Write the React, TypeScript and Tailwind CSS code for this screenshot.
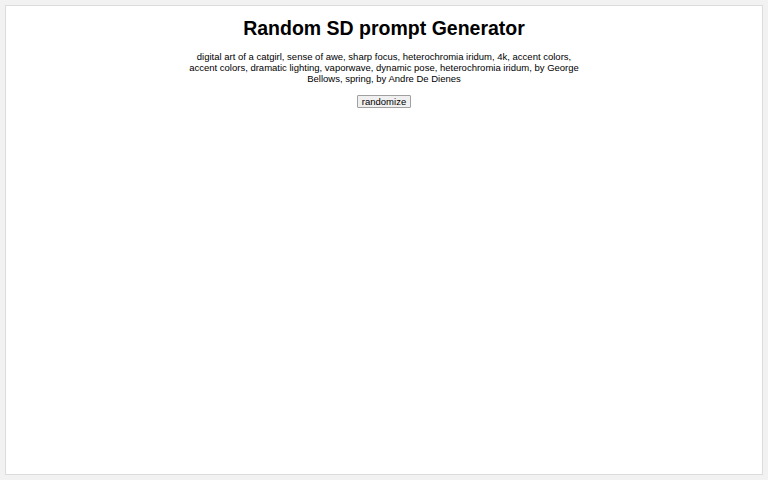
import React, { useState } from 'react';

const PROMPT =
  'digital art of a catgirl, sense of awe, sharp focus, heterochromia iridum, 4k, accent colors, accent colors, dramatic lighting, vaporwave, dynamic pose, heterochromia iridum, by George Bellows, spring, by Andre De Dienes';

export default function App() {
  const [prompt] = useState(PROMPT);

  return (
    <div className="h-[480px] w-[768px] bg-[#f2f2f2] p-[5px] font-['Liberation_Sans',Arial,sans-serif] text-black">
      <div className="flex h-[470px] flex-col items-center border border-[#dcdcdc] bg-white">
        <h1 className="mt-[8px] text-[19.5px] font-bold leading-[28px]">Random SD prompt Generator</h1>
        <p className="mt-[9px] w-[400px] text-center text-[9.5px] leading-[11px]">{prompt}</p>
        <button className="mt-[11px] rounded-[1px] border border-[#a0a0a0] bg-[#f0f0f0] px-[4px] text-[9.5px] leading-[11px]">
          randomize
        </button>
      </div>
    </div>
  );
}
